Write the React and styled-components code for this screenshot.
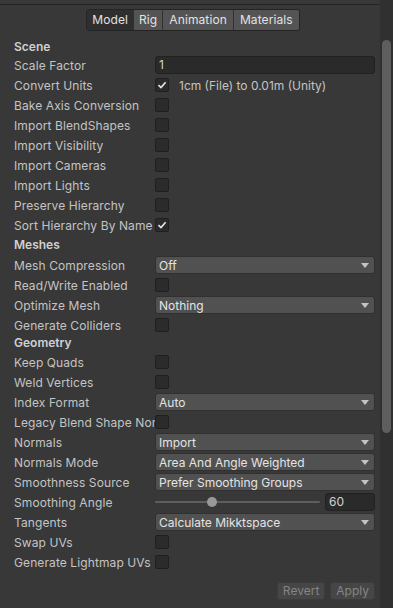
import styled, { createGlobalStyle } from 'styled-components';

const GlobalStyle = createGlobalStyle`
    html, body {
        margin: 0;
        padding: 0;
        background: #383838;
    }
    body {
        font-family: Inter, 'Noto Sans', sans-serif;
        font-size: 12px;
        color: #c4c4c4;
    }
`;

const Window = styled.div`
    display: flex;
    width: 393px;
    height: 608px;
    background: #383838;
    overflow: hidden;
`;

const Main = styled.div`
    flex: 1;
    display: flex;
    flex-direction: column;
    border-top: 1px solid #232323;
    margin-top: 4px;
`;

const Scrollbar = styled.div`
    width: 13px;
    background: #303030;
    padding: 40px 2px 0 2px;
    box-sizing: border-box;
`;

const Thumb = styled.div`
    width: 9px;
    height: 393px;
    border-radius: 5px;
    background: #5e5e5e;
`;

const Tabs = styled.div`
    display: flex;
    justify-content: center;
    margin-top: 4px;
    margin-left: 6px;
`;

const TabGroup = styled.div`
    display: flex;
    border: 1px solid #242424;
    border-radius: 3px;
    overflow: hidden;
`;

const Tab = styled.div`
    height: 20px;
    line-height: 20px;
    padding: 0 ${p => p.$pad}px;
    background: ${p => (p.$active ? '#2f2f2f' : '#545454')};
    color: #e2e2e2;
    border-left: ${p => (p.$first ? 'none' : '1px solid #303030')};
    font-size: 12px;
    letter-spacing: 0.1px;
`;

const Form = styled.div`
    display: flex;
    flex-direction: column;
    padding: 7px 5px 0 14px;
`;

const Row = styled.div`
    display: flex;
    align-items: center;
    height: 18px;
    margin-bottom: 2px;
`;

const Header = styled.div`
    height: 18px;
    line-height: 18px;
    margin-bottom: ${p => p.$mb ?? 2}px;
    margin-top: ${p => p.$mt ?? 0}px;
    font-weight: 600;
    color: #d0d0d0;
`;

const Label = styled.div`
    width: 141px;
    flex-shrink: 0;
    white-space: nowrap;
    color: #c4c4c4;
    letter-spacing: 0.1px;
`;

const Checkbox = styled.div`
    width: 12px;
    height: 12px;
    border: 1px solid #1f1f1f;
    border-radius: 2px;
    background: #2b2b2b;
    display: flex;
    align-items: center;
    justify-content: center;
    flex-shrink: 0;
`;

const CheckNote = styled.span`
    margin-left: 10px;
    color: #c4c4c4;
`;

const TextField = styled.div`
    height: 16px;
    line-height: 16px;
    border: 1px solid #212121;
    border-radius: 3px;
    background: #2a2a2a;
    padding: 0 3px;
    color: #d2d2d2;
    width: ${p => (p.$w ? `${p.$w}px` : 'auto')};
    flex: ${p => (p.$w ? 'none' : '1')};
`;

const Dropdown = styled.div`
    flex: 1;
    height: 16px;
    display: flex;
    align-items: center;
    justify-content: space-between;
    border: 1px solid #303030;
    border-radius: 3px;
    background: #515151;
    padding: 0 5px 0 3px;
    color: #e4e4e4;
`;

const Arrow = styled.div`
    width: 0;
    height: 0;
    border-left: 4px solid transparent;
    border-right: 4px solid transparent;
    border-top: 5px solid #c4c4c4;
`;

const SliderWrap = styled.div`
    flex: 1;
    display: flex;
    align-items: center;
    gap: 5px;
`;

const Track = styled.div`
    position: relative;
    flex: 1;
    height: 2px;
    background: #5e5e5e;
    border-radius: 1px;
`;

const Knob = styled.div`
    position: absolute;
    top: -4px;
    left: 52px;
    width: 10px;
    height: 10px;
    border-radius: 50%;
    background: #999999;
`;

const Footer = styled.div`
    display: flex;
    justify-content: flex-end;
    gap: 5px;
    margin-top: 9px;
`;

const Button = styled.div`
    height: 16px;
    line-height: 16px;
    padding: 0 5px;
    background: #464646;
    border: 1px solid #3c3c3c;
    border-radius: 3px;
    color: #858585;
`;

function Check({ on }) {
    return (
        <Checkbox>
            {on && (
                <svg width="10" height="10" viewBox="0 0 10 10">
                    <path d="M1.5 5.2 L4 7.6 L8.6 2.2" fill="none" stroke="#e8e8e8" strokeWidth="1.6" />
                </svg>
            )}
        </Checkbox>
    );
}

function CheckRow({ label, on, note }) {
    return (
        <Row>
            <Label>{label}</Label>
            <Check on={on} />
            {note && <CheckNote>{note}</CheckNote>}
        </Row>
    );
}

function DropRow({ label, value }) {
    return (
        <Row>
            <Label>{label}</Label>
            <Dropdown>
                <span>{value}</span>
                <Arrow />
            </Dropdown>
        </Row>
    );
}

export default function App() {
    return (
        <>
            <GlobalStyle />
            <Window>
                <Main>
                    <Tabs>
                        <TabGroup>
                            <Tab $active $first $pad={5}>Model</Tab>
                            <Tab $pad={5}>Rig</Tab>
                            <Tab $pad={6}>Animation</Tab>
                            <Tab $pad={6}>Materials</Tab>
                        </TabGroup>
                    </Tabs>
                    <Form>
                        <Header $mb={0}>Scene</Header>
                        <Row>
                            <Label>Scale Factor</Label>
                            <TextField>1</TextField>
                        </Row>
                        <CheckRow label="Convert Units" on note="1cm (File) to 0.01m (Unity)" />
                        <CheckRow label="Bake Axis Conversion" />
                        <CheckRow label="Import BlendShapes" />
                        <CheckRow label="Import Visibility" />
                        <CheckRow label="Import Cameras" />
                        <CheckRow label="Import Lights" />
                        <CheckRow label="Preserve Hierarchy" />
                        <CheckRow label="Sort Hierarchy By Name" on />
                        <Header>Meshes</Header>
                        <DropRow label="Mesh Compression" value="Off" />
                        <CheckRow label="Read/Write Enabled" />
                        <DropRow label="Optimize Mesh" value="Nothing" />
                        <CheckRow label="Generate Colliders" />
                        <Header $mt={-2} $mb={1}>Geometry</Header>
                        <CheckRow label="Keep Quads" />
                        <CheckRow label="Weld Vertices" />
                        <DropRow label="Index Format" value="Auto" />
                        <CheckRow label="Legacy Blend Shape Nor" />
                        <DropRow label="Normals" value="Import" />
                        <DropRow label="Normals Mode" value="Area And Angle Weighted" />
                        <DropRow label="Smoothness Source" value="Prefer Smoothing Groups" />
                        <Row>
                            <Label>Smoothing Angle</Label>
                            <SliderWrap>
                                <Track>
                                    <Knob />
                                </Track>
                                <TextField $w={42}>60</TextField>
                            </SliderWrap>
                        </Row>
                        <DropRow label="Tangents" value="Calculate Mikktspace" />
                        <CheckRow label="Swap UVs" />
                        <CheckRow label="Generate Lightmap UVs" />
                        <Footer>
                            <Button>Revert</Button>
                            <Button>Apply</Button>
                        </Footer>
                    </Form>
                </Main>
                <Scrollbar>
                    <Thumb />
                </Scrollbar>
            </Window>
        </>
    );
}
